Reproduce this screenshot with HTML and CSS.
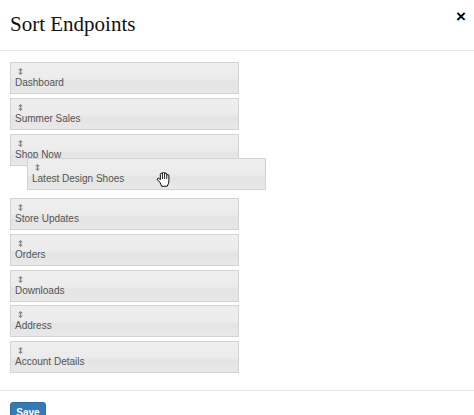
FILE: index.html
```html
<!DOCTYPE html>
<html>
<head>
<meta charset="utf-8">
<link rel="stylesheet" href="styles.css">
</head>
<body>
<div class="modal">
  <div class="modal-header">
    <h4 class="title">Sort Endpoints</h4>
    <span class="close">×</span>
  </div>
  <div class="modal-body">
    <ul class="sortable">
      <li class="item"><span class="icon"><svg width="5" height="7" viewBox="0 0 5 7"><path d="M2.5 0 L5 2.2 L3.2 2.2 L3.2 4.8 L5 4.8 L2.5 7 L0 4.8 L1.8 4.8 L1.8 2.2 L0 2.2 Z" fill="#888"/></svg></span><span class="label">Dashboard</span></li>
      <li class="item"><span class="icon"><svg width="5" height="7" viewBox="0 0 5 7"><path d="M2.5 0 L5 2.2 L3.2 2.2 L3.2 4.8 L5 4.8 L2.5 7 L0 4.8 L1.8 4.8 L1.8 2.2 L0 2.2 Z" fill="#888"/></svg></span><span class="label">Summer Sales</span></li>
      <li class="item"><span class="icon"><svg width="5" height="7" viewBox="0 0 5 7"><path d="M2.5 0 L5 2.2 L3.2 2.2 L3.2 4.8 L5 4.8 L2.5 7 L0 4.8 L1.8 4.8 L1.8 2.2 L0 2.2 Z" fill="#888"/></svg></span><span class="label">Shop Now</span></li>
      <li class="placeholder"></li>
      <li class="item"><span class="icon"><svg width="5" height="7" viewBox="0 0 5 7"><path d="M2.5 0 L5 2.2 L3.2 2.2 L3.2 4.8 L5 4.8 L2.5 7 L0 4.8 L1.8 4.8 L1.8 2.2 L0 2.2 Z" fill="#888"/></svg></span><span class="label">Store Updates</span></li>
      <li class="item"><span class="icon"><svg width="5" height="7" viewBox="0 0 5 7"><path d="M2.5 0 L5 2.2 L3.2 2.2 L3.2 4.8 L5 4.8 L2.5 7 L0 4.8 L1.8 4.8 L1.8 2.2 L0 2.2 Z" fill="#888"/></svg></span><span class="label">Orders</span></li>
      <li class="item"><span class="icon"><svg width="5" height="7" viewBox="0 0 5 7"><path d="M2.5 0 L5 2.2 L3.2 2.2 L3.2 4.8 L5 4.8 L2.5 7 L0 4.8 L1.8 4.8 L1.8 2.2 L0 2.2 Z" fill="#888"/></svg></span><span class="label">Downloads</span></li>
      <li class="item"><span class="icon"><svg width="5" height="7" viewBox="0 0 5 7"><path d="M2.5 0 L5 2.2 L3.2 2.2 L3.2 4.8 L5 4.8 L2.5 7 L0 4.8 L1.8 4.8 L1.8 2.2 L0 2.2 Z" fill="#888"/></svg></span><span class="label">Address</span></li>
      <li class="item"><span class="icon"><svg width="5" height="7" viewBox="0 0 5 7"><path d="M2.5 0 L5 2.2 L3.2 2.2 L3.2 4.8 L5 4.8 L2.5 7 L0 4.8 L1.8 4.8 L1.8 2.2 L0 2.2 Z" fill="#888"/></svg></span><span class="label">Account Details</span></li>
    </ul>
  </div>
  <div class="modal-footer">
    <button class="btn-save">Save</button>
  </div>
  <div class="item dragging"><span class="icon"><svg width="5" height="7" viewBox="0 0 5 7"><path d="M2.5 0 L5 2.2 L3.2 2.2 L3.2 4.8 L5 4.8 L2.5 7 L0 4.8 L1.8 4.8 L1.8 2.2 L0 2.2 Z" fill="#888"/></svg></span><span class="label">Latest Design Shoes</span></div>
  <svg class="cursor" width="14" height="15" viewBox="0 0 13 14"><path d="M3.5 9.5 L1.5 7.5 Q0.6 6.5 1.5 6 Q2.5 5.5 3.4 6.5 L4 7.2 L4 2.2 Q4 1.2 5 1.2 Q6 1.2 6 2.2 L6 1.2 Q6 0.3 7 0.3 Q8 0.3 8 1.2 L8 1.8 Q8 1 9 1 Q10 1 10 2 L10 3.2 Q10 2.4 11 2.4 Q12 2.4 12 3.4 L12 8.2 Q12 11 10.4 13.3 L5.2 13.3 Q4.5 11.3 3.5 9.5 Z" fill="#fff" stroke="#000" stroke-width="0.9" stroke-linejoin="round"/><path d="M6 2.2 L6 6.5 M8 1.8 L8 6.5 M10 3.2 L10 6.5" stroke="#000" stroke-width="0.8" fill="none"/></svg>
</div>
</body>
</html>
```
FILE: styles.css
```css
html, body {
  margin: 0;
  padding: 0;
  background: #fff;
}
.modal {
  position: relative;
  width: 474px;
  height: 415px;
  overflow: hidden;
  font-family: "Liberation Sans", Arial, sans-serif;
}
.modal-header {
  height: 50px;
  border-bottom: 1px solid #e5e5e5;
  display: flex;
  align-items: center;
  justify-content: space-between;
  padding: 0 8px 0 10px;
  box-sizing: content-box;
}
.title {
  margin: 0;
  font-family: "Liberation Serif", "Times New Roman", serif;
  font-weight: normal;
  font-size: 21px;
  color: #111;
  line-height: 1;
  padding-bottom: 2px;
}
.close {
  font-weight: bold;
  font-size: 17px;
  color: #000;
  line-height: 1;
  align-self: flex-start;
  margin-top: 8px;
}
.modal-body {
  padding: 11px 10px 13.25px 10px;
}
.sortable {
  list-style: none;
  margin: 0;
  padding: 0;
  width: 229px;
}
.item {
  box-sizing: border-box;
  height: 32px;
  margin-bottom: 3.75px;
  border: 1px solid #d3d3d3;
  background: linear-gradient(to bottom, #eeeeee 0%, #ececec 50%, #e4e4e4 62%, #e6e6e6 80%, #e8e8e8 100%);
  padding: 4px 4px 3px 4px;
  display: flex;
  flex-direction: column;
}
.icon {
  display: block;
  height: 10px;
  line-height: 0;
  padding: 1px 0 0 3px;
  box-sizing: border-box;
}
.label {
  display: block;
  font-size: 10px;
  line-height: 12px;
  color: #555;
}
.placeholder {
  height: 25px;
  margin-bottom: 3.75px;
}
.modal-footer {
  border-top: 1px solid #e5e5e5;
  padding: 11px 10px 0 10px;
}
.btn-save {
  font-family: "Liberation Sans", Arial, sans-serif;
  font-size: 10px;
  font-weight: bold;
  color: #fff;
  background: #337ab7;
  border: 1px solid #2e6da4;
  border-radius: 3px;
  width: 36px;
  height: 22px;
  padding: 0;
  text-align: center;
  line-height: 18px;
}
.dragging {
  position: absolute;
  left: 27px;
  top: 158px;
  width: 239px;
  margin: 0;
}
.cursor {
  position: absolute;
  left: 156px;
  top: 172px;
}
```
